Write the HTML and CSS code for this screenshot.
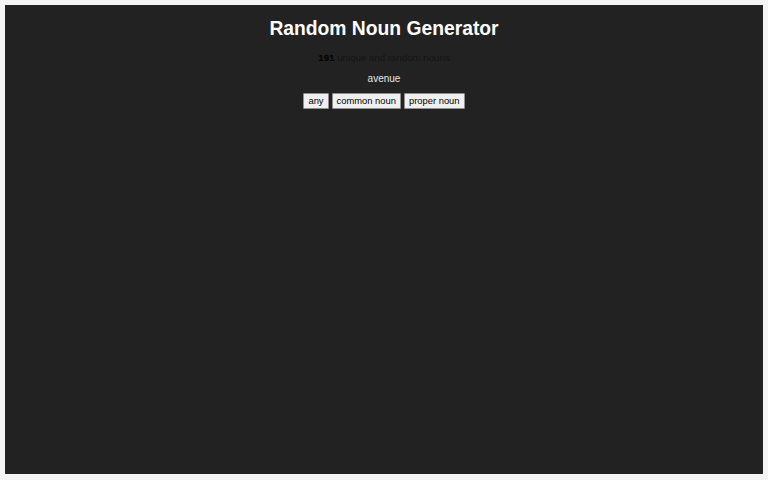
FILE: index.html
```html
<!DOCTYPE html>
<html lang="en">
<head>
    <meta charset="UTF-8">
    <meta name="viewport" content="width=device-width, initial-scale=1.0">
    <title>Random Noun Generator</title>

    <!-- CSS Styles -->
    <link rel="stylesheet" href="styles.css">
</head>
<body>

    <div class="generator">
        <h1>Random Noun Generator</h1>

        <!-- Word count -->
        <p class="count"><b>191</b> unique and random nouns</p>

        <!-- Current noun -->
        <p class="noun" id="noun">avenue</p>

        <!-- Filter buttons -->
        <div class="filters">
            <button class="filter-btn">any</button>
            <button class="filter-btn">common noun</button>
            <button class="filter-btn">proper noun</button>
        </div>
    </div>

</body>
</html>
```

FILE: styles.css
```css
* {
    margin: 0;
    padding: 0;
    box-sizing: border-box;
}

body {
    font-family: 'Liberation Sans', Arial, sans-serif;
    background-color: #f4f4f4;
    padding: 5px;
    text-align: center;
}

.generator {
    background-color: #222;
    height: 469px;
    padding-top: 12px;
}

h1 {
    color: #fff;
    font-size: 19.3px;
    line-height: 24px;
    font-weight: bold;
}

.count {
    margin-top: 11px;
    font-size: 9.7px;
    line-height: 12px;
    color: #141414;
}

.count b {
    color: #000;
}

.noun {
    margin-top: 9px;
    font-size: 10px;
    line-height: 12px;
    color: #e6e6e6;
}

.filters {
    margin-top: 8px;
    font-size: 0;
}

.filter-btn {
    font-family: 'Liberation Sans', Arial, sans-serif;
    font-size: 9.4px;
    line-height: 12px;
    padding: 1px 4px;
    margin: 0 1.5px;
    background-color: #f0f0f0;
    color: #000;
    border: 1px solid #8f8f8f;
    border-radius: 1px;
    cursor: pointer;
}

.filter-btn:hover {
    background-color: #e5e5e5;
}
```
